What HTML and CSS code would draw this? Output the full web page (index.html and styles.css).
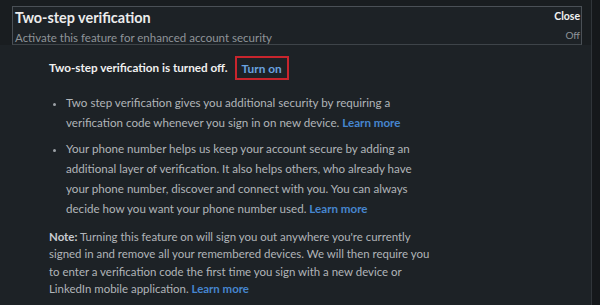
FILE: index.html
```html
<!DOCTYPE html>
<html>
<head>
<meta charset="utf-8">
<link rel="stylesheet" href="styles.css">
</head>
<body>
<div class="page">
  <div class="main">
    <div class="head-wrap">
      <div class="head">
        <div class="head-text">
          <div class="title">Two-step verification</div>
          <div class="subtitle">Activate this feature for enhanced account security</div>
        </div>
        <div class="head-side">
          <div class="close">Close</div>
          <div class="off">Off</div>
        </div>
      </div>
    </div>
    <div class="content">
      <div class="status">
        <span class="status-text">Two-step verification is turned off.</span>
        <span class="turn-on">Turn on</span>
      </div>
      <ul class="points">
        <li>Two step verification gives you additional security by requiring a<br>verification code whenever you sign in on new device. <a class="link">Learn more</a></li>
        <li>Your phone number helps us keep your account secure by adding an<br>additional layer of verification. It also helps others, who already have<br>your phone number, discover and connect with you. You can always<br>decide how you want your phone number used. <a class="link">Learn more</a></li>
      </ul>
      <p class="note"><b>Note:</b> Turning this feature on will sign you out anywhere you're currently<br>signed in and remove all your remembered devices. We will then require you<br>to enter a verification code the first time you sign with a new device or<br>LinkedIn mobile application. <a class="link">Learn more</a></p>
    </div>
  </div>
  <div class="edge"></div>
</div>
</body>
</html>
```
FILE: styles.css
```css
* { box-sizing: border-box; }
html, body { margin: 0; padding: 0; }
body {
  background: #1d2226;
  font-family: Lato, "Noto Sans", sans-serif;
  color: #b1b5b9;
  width: 600px;
  height: 305px;
  overflow: hidden;
}
.page { display: flex; height: 305px; }
.main {
  flex: 1;
  border-right: 1px solid #30353a;
  background: #1d2226;
}
.edge { width: 8px; background: #15181b; }
.head-wrap {
  background: #191d20;
  padding: 6px 9px 0 12px;
}
.head {
  display: flex;
  justify-content: space-between;
  height: 39px;
  border: 1px solid #4a5056;
  border-bottom-color: #3e4449;
  background: #1d2226;
  padding: 0 0 0 2px;
}
.title {
  font-size: 14.4px;
  font-weight: 700;
  color: #ececec;
  line-height: 20px;
  margin-top: 1px;
}
.subtitle {
  font-size: 11.5px;
  color: #8f9499;
  line-height: 16px;
  margin-top: 2px;
}
.head-side {
  text-align: right;
  padding-right: 1px;
}
.close {
  font-size: 10.5px;
  font-weight: 700;
  color: #f2f2f2;
  line-height: 12px;
  margin-top: 3px;
}
.off {
  font-size: 10px;
  color: #8f9499;
  line-height: 12px;
  margin-top: 7px;
}
.content {
  padding: 9px 0 0 49px;
}
.status {
  display: flex;
  align-items: center;
  height: 26px;
}
.status-text {
  font-size: 11.7px;
  font-weight: 700;
  color: #f0f0f0;
}
.turn-on {
  margin: 2px 0 0 7px;
  border: 2px solid #c8252d;
  height: 24px;
  width: 54px;
  display: flex;
  align-items: center;
  justify-content: center;
  font-size: 11.8px;
  font-weight: 700;
  color: #6aa3e0;
}
.points {
  margin: 13px 0 0 0;
  padding: 0 0 0 17px;
  font-size: 11.6px;
  line-height: 20px;
}
.points li { margin-bottom: 6px; }
.points li::marker { color: #9ca1a6; font-size: 10px; }
.link { color: #4686cf; font-weight: 700; }
.note {
  margin: 9px 0 0 0;
  font-size: 11.45px;
  line-height: 17.3px;
}
.note b { color: #c8ccd0; }
```
